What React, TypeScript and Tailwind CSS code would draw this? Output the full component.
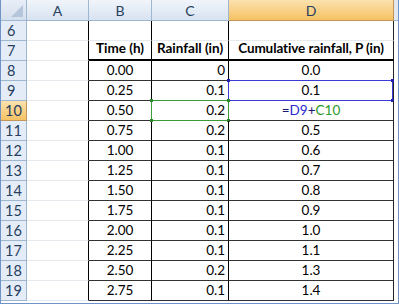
import React from "react";

const rows = [
  { r: 8, t: "0.00", c: "0", d: "0.0" },
  { r: 9, t: "0.25", c: "0.1", d: "0.1" },
  { r: 10, t: "0.50", c: "0.2", d: "" },
  { r: 11, t: "0.75", c: "0.2", d: "0.5" },
  { r: 12, t: "1.00", c: "0.1", d: "0.6" },
  { r: 13, t: "1.25", c: "0.1", d: "0.7" },
  { r: 14, t: "1.50", c: "0.1", d: "0.8" },
  { r: 15, t: "1.75", c: "0.1", d: "0.9" },
  { r: 16, t: "2.00", c: "0.1", d: "1.0" },
  { r: 17, t: "2.25", c: "0.1", d: "1.1" },
  { r: 18, t: "2.50", c: "0.2", d: "1.3" },
  { r: 19, t: "2.75", c: "0.1", d: "1.4" },
];

const Handle = ({ cls }: { cls: string }) => (
  <span className={`absolute w-[3px] h-[3px] ${cls}`} />
);

export default function App() {
  const font = { fontFamily: "Lato, 'Open Sans', sans-serif" };
  return (
    <div
      className="w-[399px] h-[304px] bg-white border-l border-r border-b border-[#6f93c6] overflow-hidden text-[13.5px] text-black"
      style={font}
    >
      <div className="grid grid-cols-[26px_62px_63px_77px_165px_4px] grid-rows-[21px_repeat(14,20px)]">
        {/* header row */}
        <div className="relative bg-gradient-to-b from-[#e8eef7] to-[#d5dfed] border-r border-b border-[#9eb6ce]">
          <div className="absolute right-[3px] bottom-[3px] w-0 h-0 border-l-[12px] border-l-transparent border-b-[12px] border-b-[#b5c6dc]" />
        </div>
        {["A", "B", "C"].map((l) => (
          <div
            key={l}
            className="flex items-center justify-center bg-gradient-to-b from-[#f1f5fb] to-[#d8e3f1] border-r border-b border-[#9eb6ce] text-[#27405f] text-[14px]"
          >
            {l}
          </div>
        ))}
        <div className="flex items-center justify-center bg-gradient-to-b from-[#fbe1ad] to-[#f5c262] border-r border-b border-[#c2955a] text-[#27405f] text-[14px]">
          D
        </div>
        <div className="bg-[#e3e8ef] border-b border-[#9eb6ce]" />

        {/* row 6 */}
        <div className="flex items-center pl-[6px] bg-[#e4ecf7] border-r border-b border-[#9eb6ce] text-[#27405f] text-[14.5px]">6</div>
        <div className="border-r border-r-black border-b border-b-[#e6e9ee]" />
        <div className="border-r border-r-black border-b border-b-[#e6e9ee]" />
        <div className="border-r border-r-black border-b border-b-[#e6e9ee]" />
        <div className="border-r border-r-[#222] border-b border-b-[#e6e9ee]" />
        <div />

        {/* row 7 */}
        <div className="flex items-center pl-[6px] bg-[#e4ecf7] border-r border-b border-[#9eb6ce] text-[#27405f] text-[14.5px]">7</div>
        <div className="border-r border-r-black border-b border-b-[#e6e9ee]" />
        <div className="flex items-end justify-center pb-[1px] font-bold border-r border-r-black border-b-2 border-b-black">Time (h)</div>
        <div className="flex items-end justify-center pb-[1px] font-bold border-r border-r-black border-b-2 border-b-black">Rainfall (in)</div>
        <div className="flex items-end justify-center pb-[1px] font-bold border-r border-r-[#222] border-b-2 border-b-black whitespace-nowrap tracking-[-0.1px]">Cumulative rainfall, P (in)</div>
        <div />

        {rows.map((row) => {
          const sel = row.r === 10;
          return (
            <React.Fragment key={row.r}>
              <div
                className={
                  sel
                    ? "flex items-center pl-[4px] bg-gradient-to-b from-[#fbe1ad] to-[#f5c262] border-r border-b border-[#c2955a] text-[#27405f] text-[14.5px]"
                    : row.r < 10
                    ? "flex items-center pl-[6px] bg-[#e4ecf7] border-r border-b border-[#9eb6ce] text-[#27405f] text-[14.5px]"
                    : "flex items-center pl-[4px] bg-[#e4ecf7] border-r border-b border-[#9eb6ce] text-[#27405f] text-[14.5px]"
                }
              >
                {row.r}
              </div>
              <div className="border-r border-r-black border-b border-b-[#e6e9ee]" />
              <div className="flex items-center justify-center border-r border-r-black border-b border-b-[#333]">
                {row.t}
              </div>
              <div className="relative flex items-center justify-end pr-[3px] border-r border-r-black border-b border-b-[#333]">
                {row.c}
                {sel && (
                  <div className="absolute left-[-1px] top-[-1px] right-[-1px] bottom-[-1px] border border-[#3a9a3a]">
                    <Handle cls="bg-[#2a8a2a] left-[-2px] top-[-2px]" />
                    <Handle cls="bg-[#2a8a2a] right-[-2px] top-[-2px]" />
                    <Handle cls="bg-[#2a8a2a] left-[-2px] bottom-[-2px]" />
                    <Handle cls="bg-[#2a8a2a] right-[-2px] bottom-[-2px]" />
                  </div>
                )}
              </div>
              <div className="relative flex items-center justify-center border-r border-r-[#222] border-b border-b-[#333]">
                {sel ? (
                  <span>
                    <span className="text-[#1a1a6a]">=</span>
                    <span className="text-[#2a2ad0]">D9</span>
                    <span className="text-[#1a1a6a]">+</span>
                    <span className="text-[#2a9a2a]">C10</span>
                  </span>
                ) : (
                  row.d
                )}
                {row.r === 9 && (
                  <div className="absolute left-[-1px] top-[-1px] right-0 bottom-[-1px] border border-[#3b3bd8]">
                    <Handle cls="bg-[#2020b0] left-[-2px] top-[-2px]" />
                    <Handle cls="bg-[#2020b0] right-[-2px] top-[-2px]" />
                    <Handle cls="bg-[#2020b0] left-[-2px] bottom-[-2px]" />
                    <Handle cls="bg-[#2020b0] right-[-2px] bottom-[-2px]" />
                  </div>
                )}
              </div>
              <div />
            </React.Fragment>
          );
        })}
      </div>
    </div>
  );
}
